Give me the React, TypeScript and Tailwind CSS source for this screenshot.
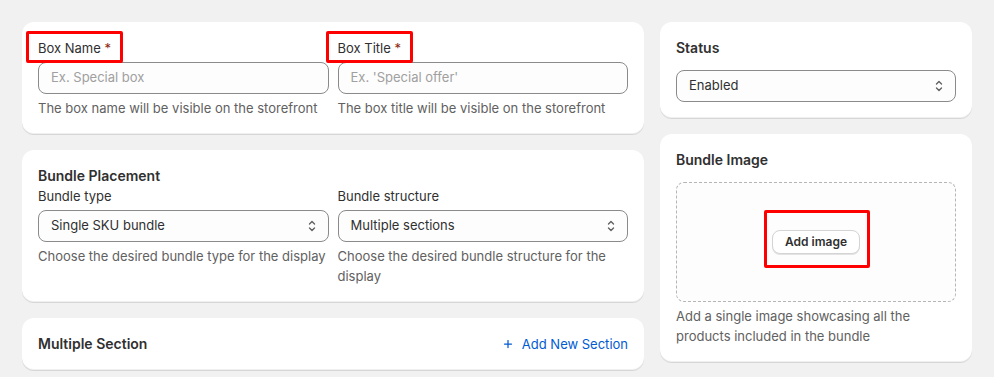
import { Plus } from 'lucide-react';

const font = { fontFamily: 'Inter, "Noto Sans", sans-serif' };

const SelectIcon = () => (
  <svg width="12" height="16" viewBox="0 0 12 16" fill="none" stroke="#616161" strokeWidth="1.4" strokeLinecap="round" strokeLinejoin="round">
    <path d="M3.5 6 6 3.5 8.5 6" />
    <path d="M3.5 10 6 12.5 8.5 10" />
  </svg>
);

const Card = ({ children, className = '' }: { children: React.ReactNode; className?: string }) => (
  <div className={`bg-white rounded-xl p-4 shadow-[0_1px_0_0_rgba(26,26,26,0.12),inset_0_-1px_0_0_rgba(0,0,0,0.06)] ${className}`}>
    {children}
  </div>
);

const Marked = ({ children }: { children: React.ReactNode }) => (
  <span className="relative inline-block">
    {children}
    <span className="absolute -left-3 -right-3 -top-[7px] -bottom-[5px] border-[3px] border-[#ff0000] rounded-[2px] pointer-events-none" />
  </span>
);

const TextField = ({ label, placeholder, help }: { label: string; placeholder: string; help: string }) => (
  <div className="flex flex-col">
    <div className="leading-5 text-[#303030]">
      <Marked>
        {label} <span className="text-[#8e1f0b]">*</span>
      </Marked>
    </div>
    <div className="mt-1 h-8 rounded-lg border border-[#8a8a8a] bg-[#fdfdfd] px-3 flex items-center text-[#a0a0a0]">
      {placeholder}
    </div>
    <p className="mt-1 leading-5 text-[#616161]">{help}</p>
  </div>
);

const SelectField = ({ label, value, help }: { label?: string; value: string; help?: string }) => (
  <div className="flex flex-col">
    {label && <div className="leading-5 text-[#303030] mb-1">{label}</div>}
    <div className="h-8 rounded-lg border border-[#8a8a8a] bg-[#fdfdfd] pl-3 pr-2.5 flex items-center justify-between text-[#303030]">
      <span>{value}</span>
      <SelectIcon />
    </div>
    {help && <p className="mt-1 leading-5 text-[#616161]">{help}</p>}
  </div>
);

export default function App() {
  return (
    <div style={font} className="min-h-screen bg-[#f1f1f1] pt-[22px] pl-[22px] text-[13px]">
      <div className="grid grid-cols-[622px_312px] gap-4 items-start">
        <div className="flex flex-col gap-4">
          <Card>
            <div className="grid grid-cols-2 gap-x-[9px]">
              <TextField label="Box Name" placeholder="Ex. Special box" help="The box name will be visible on the storefront" />
              <TextField label="Box Title" placeholder="Ex. 'Special offer'" help="The box title will be visible on the storefront" />
            </div>
          </Card>

          <Card>
            <h2 className="text-[14px] leading-5 font-semibold text-[#303030]">Bundle Placement</h2>
            <div className="grid grid-cols-2 gap-x-[9px]">
              <SelectField label="Bundle type" value="Single SKU bundle" help="Choose the desired bundle type for the display" />
              <SelectField label="Bundle structure" value="Multiple sections" help="Choose the desired bundle structure for the display" />
            </div>
          </Card>

          <Card className="flex items-center justify-between">
            <h2 className="text-[14px] leading-5 font-semibold text-[#303030]">Multiple Section</h2>
            <button className="flex items-center gap-2 text-[#005bd3] leading-5">
              <Plus size={12} strokeWidth={2.5} />
              Add New Section
            </button>
          </Card>
        </div>

        <div className="flex flex-col gap-4">
          <Card>
            <h2 className="text-[14px] leading-5 font-semibold text-[#303030] mb-3">Status</h2>
            <SelectField value="Enabled" />
          </Card>

          <Card>
            <h2 className="text-[14px] leading-5 font-semibold text-[#303030] mb-3">Bundle Image</h2>
            <div className="h-[120px] rounded-lg border border-dashed border-[#b5b5b5] bg-[#fdfdfd] flex items-center justify-center">
              <span className="relative inline-block">
                <button className="h-6 px-3 rounded-lg bg-white border border-[#d4d4d4] shadow-[0_1px_0_0_rgba(0,0,0,0.1)] text-[12px] font-semibold text-[#303030]">
                  Add image
                </button>
                <span className="absolute -left-2 -right-[10px] -top-5 -bottom-[14px] border-[3px] border-[#ff0000] rounded-[2px] pointer-events-none" />
              </span>
            </div>
            <p className="mt-1 leading-5 text-[#616161]">Add a single image showcasing all the products included in the bundle</p>
          </Card>
        </div>
      </div>
    </div>
  );
}
